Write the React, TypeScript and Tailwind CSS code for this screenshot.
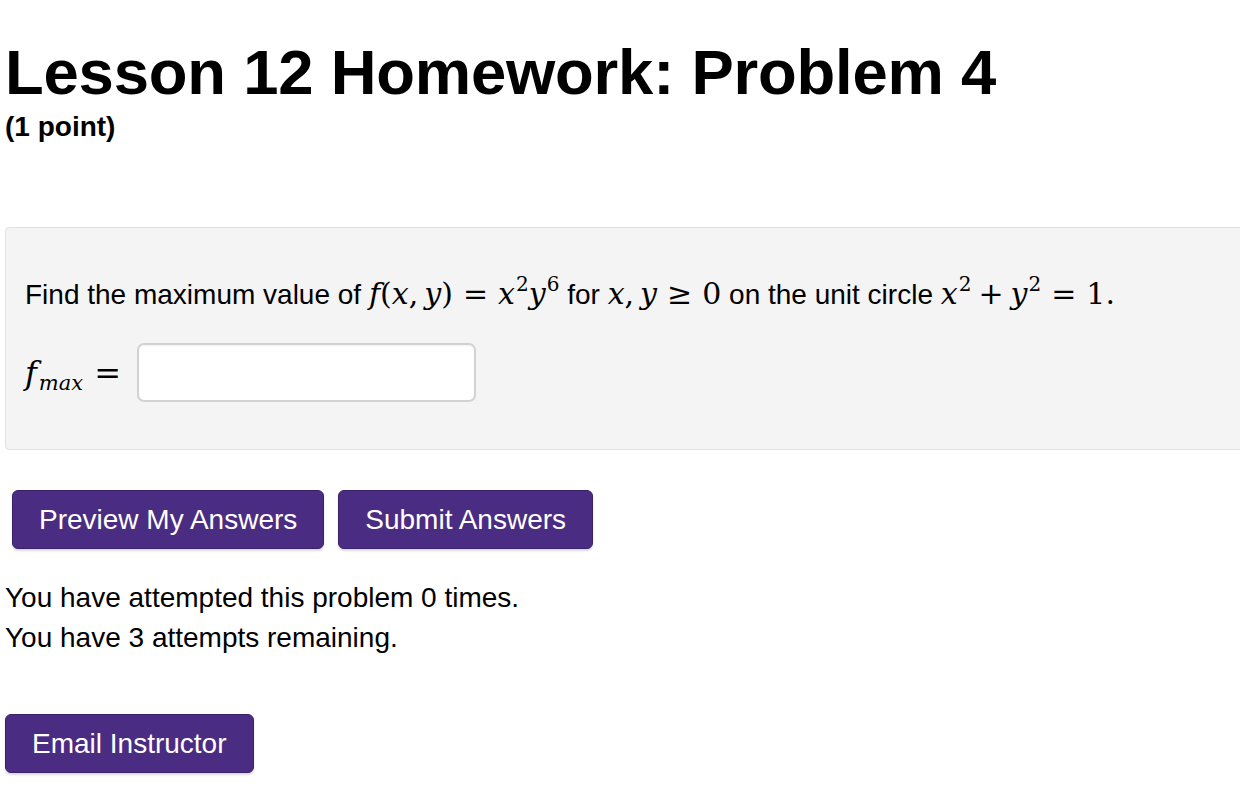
import React from "react";

const sans = "font-['Helvetica_Neue','Liberation_Sans',Arial,sans-serif]";
const math = "font-['DejaVu_Serif','Liberation_Serif',serif]";

function M({ children }: { children: React.ReactNode }) {
  return <span className={`${math} text-[30px] whitespace-nowrap`}>{children}</span>;
}

function I({ children }: { children: React.ReactNode }) {
  return <span className="italic">{children}</span>;
}

function Sup({ children }: { children: React.ReactNode }) {
  return <sup className="text-[20px] not-italic -top-[13px] ml-[1px]">{children}</sup>;
}

// operator with spacing on both sides
function Op({ sym, gap = "mx-[7px]" }: { sym: string; gap?: string }) {
  return <span className={gap}>{sym}</span>;
}

function PurpleButton({ label }: { label: string }) {
  return (
    <button className="h-[59px] px-[26px] rounded-[6px] bg-[#4a2c82] border border-[#3b2169] text-white text-[28px] leading-none shadow-[0_2px_2px_rgba(0,0,0,0.15)]">
      {label}
    </button>
  );
}

export default function App() {
  return (
    <div className={`${sans} text-black overflow-hidden w-[1240px] h-[792px] pl-[5px] bg-white`}>
      {/* Header */}
      <h1 className="mt-[38px] text-[63.4px] font-bold leading-[69px] tracking-[-0.2px]">
        Lesson 12 Homework: Problem 4
      </h1>
      <div className="text-[28px] font-bold leading-[40px]">(1 point)</div>

      {/* Problem well */}
      <div className="mt-[80px] w-[1260px] h-[223px] bg-[#f4f4f4] border border-[#e1e1e1] rounded-[4px] pl-[19px] pt-[46px]">
        <p className="text-[28px] leading-[40px] h-[40px] whitespace-nowrap">
          Find the maximum value of{" "}
          <M>
            <I>f</I>(<I>x</I>,<span className="ml-[6px]" />
            <I>y</I>)<Op sym="=" gap="mx-[10px]" />
            <I>x</I>
            <Sup>2</Sup>
            <I>y</I>
            <Sup>6</Sup>
          </M>{" "}
          for{" "}
          <M>
            <I>x</I>,<span className="ml-[6px]" />
            <I>y</I>
            <Op sym="≥" gap="mx-[10px]" />0
          </M>{" "}
          on the unit circle{" "}
          <M>
            <I>x</I>
            <Sup>2</Sup>
            <Op sym="+" gap="mx-[7px]" />
            <I>y</I>
            <Sup>2</Sup>
            <Op sym="=" gap="mx-[10px]" />1.
          </M>
        </p>
        <div className="mt-[29px] flex items-center">
          <span className={`${math} text-[32px] w-[112px] flex items-baseline`}>
            <I>f</I>
            <span className="italic text-[21px] relative top-[6px] ml-[2px]">max</span>
            <span className="ml-[11px]">=</span>
          </span>
          <input
            type="text"
            className="w-[339px] h-[59px] bg-white border-2 border-[#d2d2d2] rounded-[7px] shadow-[inset_0_1px_2px_rgba(0,0,0,0.06)] outline-none"
          />
        </div>
      </div>

      {/* Actions */}
      <div className="mt-[40px] pl-[7px] flex gap-[14px]">
        <PurpleButton label="Preview My Answers" />
        <PurpleButton label="Submit Answers" />
      </div>

      <div className="mt-[29px] text-[28px] leading-[40px]">
        <div>You have attempted this problem 0 times.</div>
        <div>You have 3 attempts remaining.</div>
      </div>

      <div className="mt-[56px]">
        <PurpleButton label="Email Instructor" />
      </div>
    </div>
  );
}
